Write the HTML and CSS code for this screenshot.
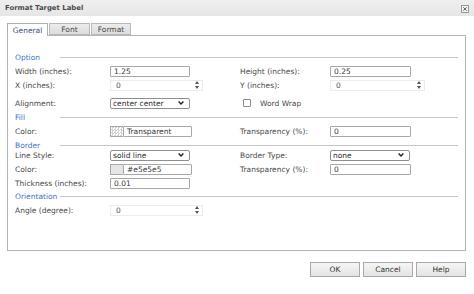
FILE: index.html
```html
<!DOCTYPE html>
<html>
<head>
<meta charset="utf-8">
<link rel="stylesheet" href="styles.css">
</head>
<body>
<div class="dialog">
  <div class="titlebar">
    <span class="title">Format Target Label</span>
    <span class="close"><svg width="8" height="8" viewBox="0 0 8 8"><rect x="0.5" y="0.5" width="7" height="7" fill="#f2f2f2" stroke="#9a9a9a"/><path d="M2.3 2.3 L5.7 5.7 M5.7 2.3 L2.3 5.7" stroke="#666" stroke-width="1"/></svg></span>
  </div>
  <div class="tabs">
    <div class="tab active">General</div>
    <div class="tab t-font">Font</div>
    <div class="tab t-format">Format</div>
  </div>
  <div class="panel">
    <div class="hdr"><span class="hdr-text">Option</span><span class="hdr-line"></span></div>
    <div class="row">
      <span class="lbl">Width (inches):</span>
      <span class="inp">1.25</span>
      <span class="lbl">Height (inches):</span>
      <span class="inp r">0.25</span>
    </div>
    <div class="row">
      <span class="lbl">X (inches):</span>
      <span class="spin"><span class="val">0</span><svg class="arr" width="4" height="8" viewBox="0 0 4 8"><path d="M2 0 L4 3 L0 3 Z M0 5 L4 5 L2 8 Z" fill="#555"/></svg></span>
      <span class="lbl">Y (inches):</span>
      <span class="spin r"><span class="val">0</span><svg class="arr" width="4" height="8" viewBox="0 0 4 8"><path d="M2 0 L4 3 L0 3 Z M0 5 L4 5 L2 8 Z" fill="#555"/></svg></span>
    </div>
    <div class="row row-align">
      <span class="lbl">Alignment:</span>
      <span class="sel">center center<svg class="chev" width="6" height="4" viewBox="0 0 6 4"><path d="M0.6 0.6 L3 3 L5.4 0.6" fill="none" stroke="#222" stroke-width="1.4"/></svg></span>
      <span class="chk"><span class="box"></span><span class="chk-lbl">Word Wrap</span></span>
      <span></span>
    </div>
    <div class="hdr"><span class="hdr-text">Fill</span><span class="hdr-line"></span></div>
    <div class="row">
      <span class="lbl">Color:</span>
      <span class="color"><span class="sw sw-trans"></span><span class="inp cinp">Transparent</span></span>
      <span class="lbl">Transparency (%):</span>
      <span class="inp r">0</span>
    </div>
    <div class="hdr"><span class="hdr-text">Border</span><span class="hdr-line"></span></div>
    <div class="row row-ls">
      <span class="lbl">Line Style:</span>
      <span class="sel">solid line<svg class="chev" width="6" height="4" viewBox="0 0 6 4"><path d="M0.6 0.6 L3 3 L5.4 0.6" fill="none" stroke="#222" stroke-width="1.4"/></svg></span>
      <span class="lbl">Border Type:</span>
      <span class="sel r">none<svg class="chev" width="6" height="4" viewBox="0 0 6 4"><path d="M0.6 0.6 L3 3 L5.4 0.6" fill="none" stroke="#222" stroke-width="1.4"/></svg></span>
    </div>
    <div class="row">
      <span class="lbl">Color:</span>
      <span class="color"><span class="sw sw-gray"></span><span class="inp cinp">#e5e5e5</span></span>
      <span class="lbl">Transparency (%):</span>
      <span class="inp r">0</span>
    </div>
    <div class="row row-th">
      <span class="lbl">Thickness (inches):</span>
      <span class="inp">0.01</span>
      <span></span><span></span>
    </div>
    <div class="hdr hdr-or"><span class="hdr-text">Orientation</span><span class="hdr-line"></span></div>
    <div class="row">
      <span class="lbl">Angle (degree):</span>
      <span class="spin"><span class="val">0</span><svg class="arr" width="4" height="8" viewBox="0 0 4 8"><path d="M2 0 L4 3 L0 3 Z M0 5 L4 5 L2 8 Z" fill="#555"/></svg></span>
      <span></span><span></span>
    </div>
  </div>
  <div class="buttons">
    <span class="btn">OK</span>
    <span class="btn">Cancel</span>
    <span class="btn">Help</span>
  </div>
</div>
</body>
</html>
```
FILE: styles.css
```css
html, body {
  margin: 0;
  padding: 0;
  background: #ffffff;
}
body {
  width: 474px;
  height: 294px;
  overflow: hidden;
  font-family: "DejaVu Sans", Verdana, sans-serif;
  font-size: 7.5px;
  color: #444;
}
.dialog {
  width: 474px;
  height: 294px;
  display: flex;
  flex-direction: column;
}
.titlebar {
  height: 16px;
  flex-shrink: 0;
  background: linear-gradient(#efefef, #e6e6e6);
  display: flex;
  align-items: center;
  justify-content: space-between;
  padding: 0 5px 0 5px;
}
.title {
  font-weight: bold;
  font-size: 6.9px;
  color: #4a4a4a;
}
.close {
  display: flex;
  margin-top: 1px;
}
.tabs {
  display: flex;
  height: 12px;
  margin: 7px 0 0 7px;
  position: relative;
  z-index: 1;
}
.tab {
  width: 41px;
  height: 12px;
  box-sizing: border-box;
  border: 1px solid #b9b9b9;
  background: linear-gradient(#ececec, #dcdcdc);
  display: flex;
  align-items: center;
  justify-content: center;
  color: #4a4a4a;
  margin-right: 1px;
}
.tab.active {
  background: #fff;
  border-color: #b0b0b0;
  border-bottom: none;
  height: 13px;
  color: #3d4f78;
}
.tab.t-font { width: 41px; margin-right: 1px; }
.tab.t-format { width: 40px; }
.panel {
  margin: 0 8px 0 7px;
  height: 216px;
  box-sizing: border-box;
  border: 1px solid #b4b4b4;
  padding: 15px 7px 0 7px;
  display: flex;
  flex-direction: column;
  gap: 2px;
}
.hdr {
  height: 12px;
  display: flex;
  align-items: center;
}
.hdr-or { margin-top: -1px; }
.hdr-text {
  width: 45px;
  flex-shrink: 0;
  white-space: nowrap;
  color: #4470c4;
}
.hdr-line {
  flex: 1;
  height: 1px;
  background: #c6c6c6;
}
.row {
  height: 12px;
  display: grid;
  grid-template-columns: 95px 130px 90px 1fr;
  align-items: center;
}
.row-align { margin-top: 4px; }
.row-ls { margin-top: -4px; }
.lbl {
  white-space: nowrap;
  color: #484848;
}
.inp {
  width: 80px;
  height: 11px;
  box-sizing: border-box;
  border: 1px solid #a8a8a8;
  border-radius: 1px;
  background: #fff;
  padding-left: 3px;
  display: flex;
  align-items: center;
  color: #383838;
}
.inp.r { width: 81px; }
.spin {
  width: 93px;
  height: 11px;
  box-sizing: border-box;
  border: 1px solid #ececec;
  background: #fff;
  display: flex;
  align-items: center;
  justify-content: space-between;
  padding: 0 3px 0 5px;
  color: #555;
}
.spin.r { width: 95px; }
.arr { display: block; }
.sel {
  width: 80px;
  height: 11px;
  box-sizing: border-box;
  border: 1px solid #8f8f8f;
  border-radius: 2px;
  background: #fff;
  display: flex;
  align-items: center;
  justify-content: space-between;
  padding: 0 5px 0 2px;
  color: #2a2a2a;
}
.sel.r { width: 80px; }
.chev { display: block; }
.chk {
  display: flex;
  align-items: center;
  padding-left: 3px;
}
.box {
  width: 8px;
  height: 8px;
  box-sizing: border-box;
  border: 1px solid #8a8a8a;
  border-radius: 1px;
  background: #fff;
  margin-right: 9px;
}
.chk-lbl { white-space: nowrap; color: #484848; }
.color {
  display: flex;
  align-items: center;
}
.sw {
  width: 13px;
  height: 11px;
  box-sizing: border-box;
  border: 1px solid #a8a8a8;
  border-right: none;
}
.sw-trans {
  background-color: #fff;
  background-image: conic-gradient(#d4d4d4 25%, #fff 0 50%, #d4d4d4 0 75%, #fff 0);
  background-size: 3px 3px;
}
.sw-gray { background: #e5e5e5; }
.cinp { width: 69px; }
.buttons {
  display: flex;
  justify-content: flex-end;
  gap: 3px;
  margin-top: 11px;
  padding-right: 8px;
}
.btn {
  width: 50px;
  height: 15px;
  box-sizing: border-box;
  border: 1px solid #a9a9a9;
  background: linear-gradient(#f6f6f6, #e3e3e3);
  display: flex;
  align-items: center;
  justify-content: center;
  color: #333;
}
```
